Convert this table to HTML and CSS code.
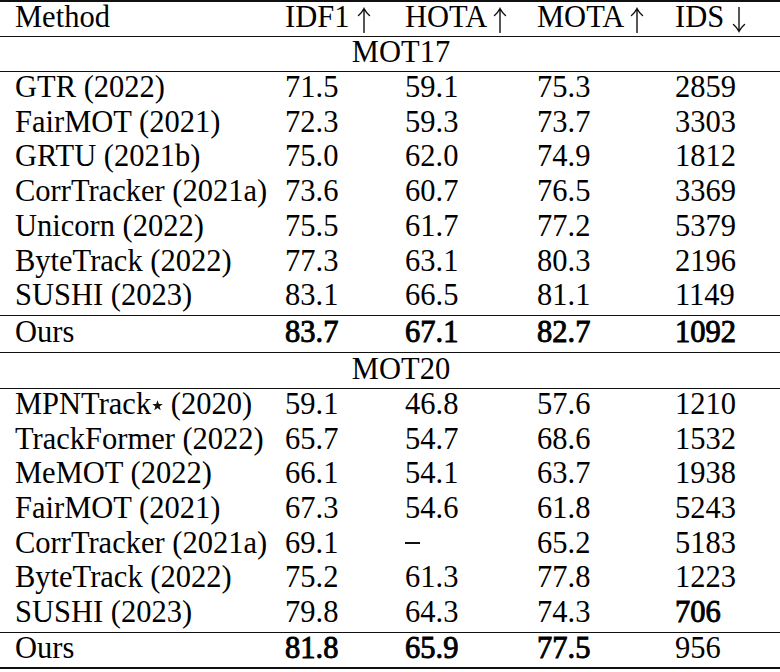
FILE: index.html
```html
<!DOCTYPE html>
<html>
<head>
    <link rel="stylesheet" href="styles.css">
</head>
<body>
    <table class="results">
        <colgroup>
            <col class="col-method">
            <col class="col-idf1">
            <col class="col-hota">
            <col class="col-mota">
            <col class="col-ids">
        </colgroup>
        <thead>
            <tr class="head-row">
                <th>Method</th>
                <th>IDF1 <svg class="arrow" viewBox="0 0 14 26"><path d="M7 1.5V25.5M1.5 8.5Q5 5.5 7 1.5Q9 5.5 12.5 8.5"/></svg></th>
                <th>HOTA <svg class="arrow" viewBox="0 0 14 26"><path d="M7 1.5V25.5M1.5 8.5Q5 5.5 7 1.5Q9 5.5 12.5 8.5"/></svg></th>
                <th>MOTA <svg class="arrow" viewBox="0 0 14 26"><path d="M7 1.5V25.5M1.5 8.5Q5 5.5 7 1.5Q9 5.5 12.5 8.5"/></svg></th>
                <th>IDS <svg class="arrow" viewBox="0 0 14 26"><path d="M7 0.5V24.5M1.5 17.5Q5 20.5 7 24.5Q9 20.5 12.5 17.5"/></svg></th>
            </tr>
        </thead>
        <tbody>
            <tr class="section-row"><td colspan="5">MOT17</td></tr>
            <tr><td>GTR (2022)</td><td>71.5</td><td>59.1</td><td>75.3</td><td>2859</td></tr>
            <tr><td>FairMOT (2021)</td><td>72.3</td><td>59.3</td><td>73.7</td><td>3303</td></tr>
            <tr><td>GRTU (2021b)</td><td>75.0</td><td>62.0</td><td>74.9</td><td>1812</td></tr>
            <tr><td>CorrTracker (2021a)</td><td>73.6</td><td>60.7</td><td>76.5</td><td>3369</td></tr>
            <tr><td>Unicorn (2022)</td><td>75.5</td><td>61.7</td><td>77.2</td><td>5379</td></tr>
            <tr><td>ByteTrack (2022)</td><td>77.3</td><td>63.1</td><td>80.3</td><td>2196</td></tr>
            <tr><td>SUSHI (2023)</td><td>83.1</td><td>66.5</td><td>81.1</td><td>1149</td></tr>
            <tr class="ours"><td>Ours</td><td class="best">83.7</td><td class="best">67.1</td><td class="best">82.7</td><td class="best">1092</td></tr>

            <tr class="section-row mot20"><td colspan="5">MOT20</td></tr>
            <tr><td>MPNTrack<svg class="star" viewBox="0 0 20 19"><polygon points="10,0 12.4,6.9 19.5,6.9 13.8,11.2 15.9,18.2 10,14 4.1,18.2 6.2,11.2 0.5,6.9 7.6,6.9"/></svg> (2020)</td><td>59.1</td><td>46.8</td><td>57.6</td><td>1210</td></tr>
            <tr><td>TrackFormer (2022)</td><td>65.7</td><td>54.7</td><td>68.6</td><td>1532</td></tr>
            <tr><td>MeMOT (2022)</td><td>66.1</td><td>54.1</td><td>63.7</td><td>1938</td></tr>
            <tr><td>FairMOT (2021)</td><td>67.3</td><td>54.6</td><td>61.8</td><td>5243</td></tr>
            <tr><td>CorrTracker (2021a)</td><td>69.1</td><td><span class="dash"></span></td><td>65.2</td><td>5183</td></tr>
            <tr><td>ByteTrack (2022)</td><td>75.2</td><td>61.3</td><td>77.8</td><td>1223</td></tr>
            <tr><td>SUSHI (2023)</td><td>79.8</td><td>64.3</td><td>74.3</td><td class="best">706</td></tr>
            <tr class="ours last"><td>Ours</td><td class="best">81.8</td><td class="best">65.9</td><td class="best">77.5</td><td>956</td></tr>
        </tbody>
    </table>
</body>
</html>
```

FILE: styles.css
```css
body {
    margin: 0;
    background: #fff;
}
.results {
    width: 780px;
    border-collapse: collapse;
    table-layout: fixed;
    font-family: "Liberation Serif", serif;
    font-size: 30.5px;
}
.col-method { width: 285px; }
.col-idf1 { width: 120px; }
.col-hota { width: 132px; }
.col-mota { width: 138px; }
.col-ids { width: 105px; }

.results th,
.results td {
    padding: 0 0 3px 0;
    height: 31.7px;
    line-height: 31.7px;
    text-align: left;
    font-weight: normal;
    white-space: nowrap;
    vertical-align: middle;
}
.results th:first-child,
.results td:first-child {
    padding-left: 15px;
}
.results thead tr {
    border-top: 2px solid #111;
    border-bottom: 1px solid #111;
}
.head-row th {
    height: 31px;
    line-height: 31px;
}
.section-row td {
    text-align: center;
    padding-left: 22px !important;
    height: 31px;
    line-height: 31px;
}
.mot20 td {
    height: 32px;
    line-height: 32px;
}
.section-row {
    border-bottom: 1px solid #111;
}
.ours {
    border-top: 1px solid #111;
    border-bottom: 1px solid #111;
}
.ours td {
    height: 33px;
    line-height: 33px;
}
.last {
    border-bottom: 2px solid #111;
}
.last td {
    height: 31px;
    line-height: 31px;
}
/* heavier strokes on the regular face for the best scores */
.results .best {
    -webkit-text-stroke: 0.9px #000;
}
.arrow {
    width: 14px;
    height: 26px;
    vertical-align: -6px;
    fill: none;
    stroke: #111;
    stroke-width: 1.4;
    stroke-linecap: round;
}
.star {
    width: 11px;
    height: 11px;
    margin-left: 1px;
    vertical-align: 3px;
    fill: #111;
}
.dash {
    display: inline-block;
    width: 15px;
    height: 1.5px;
    background: #111;
    vertical-align: 9px;
}
```
